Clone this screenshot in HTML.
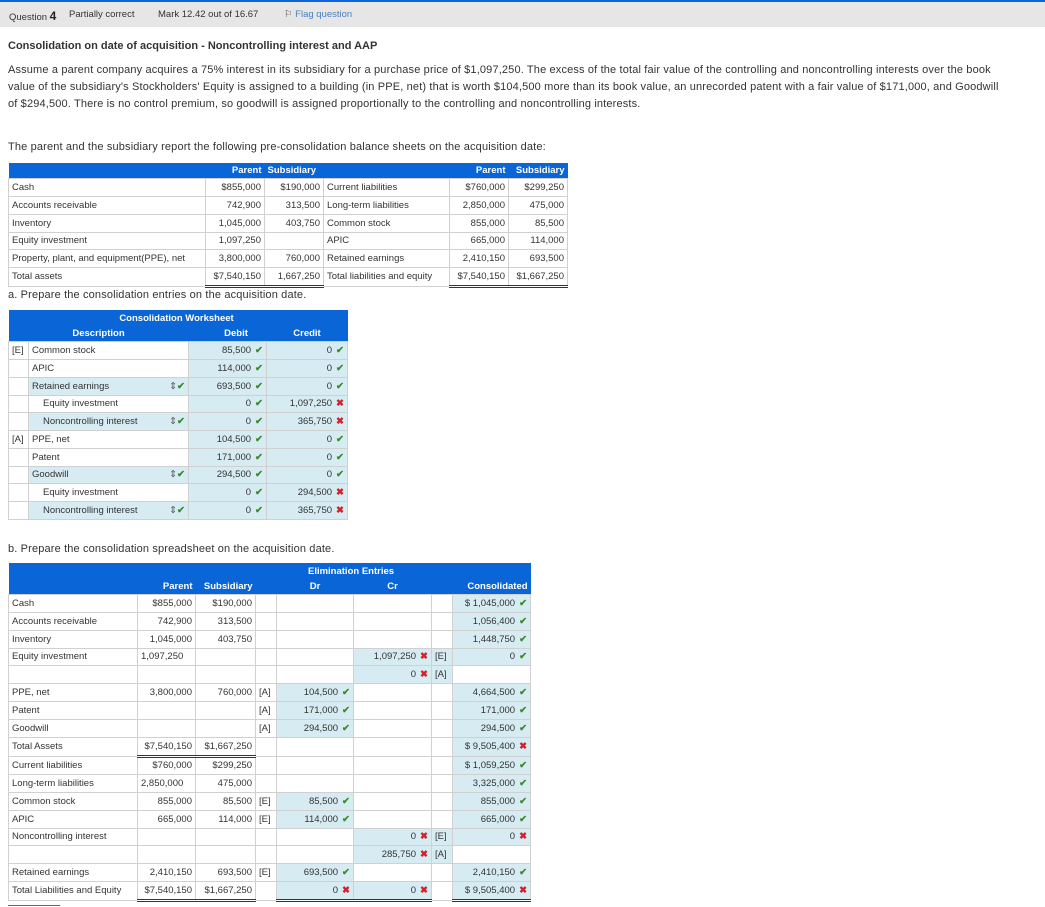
<!DOCTYPE html>
<html><head><meta charset="utf-8"><style>
*{margin:0;padding:0;box-sizing:border-box}
body{width:1045px;height:907px;background:#fff;font-family:"Liberation Sans",sans-serif;color:#333;position:relative;overflow:hidden;font-size:10px}
.bar{position:absolute;left:0;top:0;width:1045px;height:27px;background:#e6e6e6;border-top:2px solid #0a66d6}
.bar span{position:absolute;top:7px;font-size:9.5px;color:#333}
.t{position:absolute;left:8px;white-space:nowrap}
table{position:absolute;border-collapse:collapse;table-layout:fixed;font-size:9.5px}
td{border:1px solid #d0d0d0;padding:0 3px;white-space:nowrap;overflow:hidden}
th{background:#0a66d6;color:#fff;font-weight:bold;padding:0 3px;white-space:nowrap;border:none}
.r{text-align:right}.c{text-align:center}
.b{background:#d6ebf2}
.ok{color:#3a8a2c;font-weight:bold;margin-left:4px}
.no{color:#d4202b;font-weight:bold;margin-left:4px}
.tt{border-top:1px solid #222}
.dd{border-bottom:3px double #334}
</style></head><body>
<div class="bar">
<span style="left:9px">Question <b style="font-size:12px;color:#222">4</b></span>
<span style="left:69px">Partially correct</span>
<span style="left:158px">Mark 12.42 out of 16.67</span>
<span style="left:284px;color:#555">⚐ <span style="position:static;color:#4a7fc0">Flag question</span></span>
</div>
<div class="t" style="top:40px;font-size:11px;font-weight:bold;color:#333">Consolidation on date of acquisition - Noncontrolling interest and AAP</div>
<div class="t" style="top:62px;font-size:11px;line-height:17px;letter-spacing:0.15px">Assume a parent company acquires a 75% interest in its subsidiary for a purchase price of $1,097,250. The excess of the total fair value of the controlling and noncontrolling interests over the book<br>value of the subsidiary's Stockholders' Equity is assigned to a building (in PPE, net) that is worth $104,500 more than its book value, an unrecorded patent with a fair value of $171,000, and Goodwill<br>of $294,500. There is no control premium, so goodwill is assigned proportionally to the controlling and noncontrolling interests.</div>
<div class="t" style="top:141px;font-size:11px;letter-spacing:0.15px">The parent and the subsidiary report the following pre-consolidation balance sheets on the acquisition date:</div>

<table style="left:8px;top:163px;width:559px">
<colgroup><col style="width:197px"><col style="width:59px"><col style="width:59px"><col style="width:126px"><col style="width:59px"><col style="width:59px"></colgroup>
<tr style="height:15px"><th></th><th class="r">Parent</th><th style="text-align:left">Subsidiary</th><th></th><th class="r">Parent</th><th class="r">Subsidiary</th></tr>
<tr style="height:18px"><td>Cash</td><td class="r">$855,000</td><td class="r">$190,000</td><td>Current liabilities</td><td class="r">$760,000</td><td class="r">$299,250</td></tr>
<tr style="height:18px"><td>Accounts receivable</td><td class="r">742,900</td><td class="r">313,500</td><td>Long-term liabilities</td><td class="r">2,850,000</td><td class="r">475,000</td></tr>
<tr style="height:18px"><td>Inventory</td><td class="r">1,045,000</td><td class="r">403,750</td><td>Common stock</td><td class="r">855,000</td><td class="r">85,500</td></tr>
<tr style="height:17px"><td>Equity investment</td><td class="r">1,097,250</td><td></td><td>APIC</td><td class="r">665,000</td><td class="r">114,000</td></tr>
<tr style="height:18px"><td>Property, plant, and equipment(PPE), net</td><td class="r">3,800,000</td><td class="r">760,000</td><td>Retained earnings</td><td class="r">2,410,150</td><td class="r">693,500</td></tr>
<tr style="height:19px"><td>Total assets</td><td class="r tt dd">$7,540,150</td><td class="r tt dd">1,667,250</td><td>Total liabilities and equity</td><td class="r tt dd">$7,540,150</td><td class="r tt dd">$1,667,250</td></tr>
</table>
<div class="t" style="top:289px;font-size:11px;letter-spacing:0.15px">a. Prepare the consolidation entries on the acquisition date.</div>

<table style="left:8px;top:310px;width:339px">
<colgroup><col style="width:20px"><col style="width:160px"><col style="width:78px"><col style="width:81px"></colgroup>
<tr style="height:16px"><th colspan="4" class="c" style="padding-left:0">Consolidation Worksheet</th></tr>
<tr style="height:15px"><th colspan="2" class="c">Description</th><th class="c" style="padding-left:20px">Debit</th><th class="c">Credit</th></tr>
<tr style="height:18px"><td>[E]</td><td>Common stock</td><td class="r b">85,500<span class="ok">✔</span></td><td class="r b">0<span class="ok">✔</span></td></tr>
<tr style="height:18px"><td></td><td>APIC</td><td class="r b">114,000<span class="ok">✔</span></td><td class="r b">0<span class="ok">✔</span></td></tr>
<tr style="height:18px"><td></td><td class="b">Retained earnings<span style="float:right;color:#555">⇕<span class="ok" style="margin:0">✔</span></span></td><td class="r b">693,500<span class="ok">✔</span></td><td class="r b">0<span class="ok">✔</span></td></tr>
<tr style="height:17px"><td></td><td style="padding-left:14px">Equity investment</td><td class="r b">0<span class="ok">✔</span></td><td class="r b">1,097,250<span class="no">✖</span></td></tr>
<tr style="height:18px"><td></td><td class="b" style="padding-left:14px">Noncontrolling interest<span style="float:right;color:#555">⇕<span class="ok" style="margin:0">✔</span></span></td><td class="r b">0<span class="ok">✔</span></td><td class="r b">365,750<span class="no">✖</span></td></tr>
<tr style="height:18px"><td>[A]</td><td>PPE, net</td><td class="r b">104,500<span class="ok">✔</span></td><td class="r b">0<span class="ok">✔</span></td></tr>
<tr style="height:18px"><td></td><td>Patent</td><td class="r b">171,000<span class="ok">✔</span></td><td class="r b">0<span class="ok">✔</span></td></tr>
<tr style="height:17px"><td></td><td class="b">Goodwill<span style="float:right;color:#555">⇕<span class="ok" style="margin:0">✔</span></span></td><td class="r b">294,500<span class="ok">✔</span></td><td class="r b">0<span class="ok">✔</span></td></tr>
<tr style="height:18px"><td></td><td style="padding-left:14px">Equity investment</td><td class="r b">0<span class="ok">✔</span></td><td class="r b">294,500<span class="no">✖</span></td></tr>
<tr style="height:18px"><td></td><td class="b" style="padding-left:14px">Noncontrolling interest<span style="float:right;color:#555">⇕<span class="ok" style="margin:0">✔</span></span></td><td class="r b">0<span class="ok">✔</span></td><td class="r b">365,750<span class="no">✖</span></td></tr>
</table>
<div class="t" style="top:543px;font-size:11px;letter-spacing:0.15px">b. Prepare the consolidation spreadsheet on the acquisition date.</div>

<table style="left:8px;top:563px;width:522px">
<colgroup><col style="width:129px"><col style="width:58px"><col style="width:60px"><col style="width:21px"><col style="width:77px"><col style="width:78px"><col style="width:21px"><col style="width:78px"></colgroup>
<tr style="height:16px"><th></th><th></th><th></th><th></th><th colspan="3" class="c" style="padding-right:30px">Elimination Entries</th><th></th></tr>
<tr style="height:15px"><th></th><th class="r">Parent</th><th class="r">Subsidiary</th><th></th><th class="c">Dr</th><th class="c">Cr</th><th></th><th class="r">Consolidated</th></tr>
<tr style="height:18px"><td>Cash</td><td class="r">$855,000</td><td class="r">$190,000</td><td></td><td></td><td></td><td></td><td class="r b">$ 1,045,000<span class="ok">✔</span></td></tr>
<tr style="height:18px"><td>Accounts receivable</td><td class="r">742,900</td><td class="r">313,500</td><td></td><td></td><td></td><td></td><td class="r b">1,056,400<span class="ok">✔</span></td></tr>
<tr style="height:18px"><td>Inventory</td><td class="r">1,045,000</td><td class="r">403,750</td><td></td><td></td><td></td><td></td><td class="r b">1,448,750<span class="ok">✔</span></td></tr>
<tr style="height:17px"><td>Equity investment</td><td>1,097,250</td><td></td><td></td><td></td><td class="r b">1,097,250<span class="no">✖</span></td><td class="b">[E]</td><td class="r b">0<span class="ok">✔</span></td></tr>
<tr style="height:18px"><td></td><td></td><td></td><td></td><td></td><td class="r b">0<span class="no">✖</span></td><td class="b">[A]</td><td></td></tr>
<tr style="height:18px"><td>PPE, net</td><td class="r">3,800,000</td><td class="r">760,000</td><td>[A]</td><td class="r b">104,500<span class="ok">✔</span></td><td></td><td></td><td class="r b">4,664,500<span class="ok">✔</span></td></tr>
<tr style="height:18px"><td>Patent</td><td></td><td></td><td>[A]</td><td class="r b">171,000<span class="ok">✔</span></td><td></td><td></td><td class="r b">171,000<span class="ok">✔</span></td></tr>
<tr style="height:18px"><td>Goodwill</td><td></td><td></td><td>[A]</td><td class="r b">294,500<span class="ok">✔</span></td><td></td><td></td><td class="r b">294,500<span class="ok">✔</span></td></tr>
<tr style="height:19px"><td>Total Assets</td><td class="r tt dd">$7,540,150</td><td class="r tt dd">$1,667,250</td><td></td><td></td><td></td><td></td><td class="r b tt">$ 9,505,400<span class="no">✖</span></td></tr>
<tr style="height:18px"><td>Current liabilities</td><td class="r">$760,000</td><td class="r">$299,250</td><td></td><td></td><td></td><td></td><td class="r b">$ 1,059,250<span class="ok">✔</span></td></tr>
<tr style="height:18px"><td>Long-term liabilities</td><td>2,850,000</td><td class="r">475,000</td><td></td><td></td><td></td><td></td><td class="r b">3,325,000<span class="ok">✔</span></td></tr>
<tr style="height:18px"><td>Common stock</td><td class="r">855,000</td><td class="r">85,500</td><td>[E]</td><td class="r b">85,500<span class="ok">✔</span></td><td></td><td></td><td class="r b">855,000<span class="ok">✔</span></td></tr>
<tr style="height:18px"><td>APIC</td><td class="r">665,000</td><td class="r">114,000</td><td>[E]</td><td class="r b">114,000<span class="ok">✔</span></td><td></td><td></td><td class="r b">665,000<span class="ok">✔</span></td></tr>
<tr style="height:17px"><td>Noncontrolling interest</td><td></td><td></td><td></td><td></td><td class="r b">0<span class="no">✖</span></td><td class="b">[E]</td><td class="r b">0<span class="no">✖</span></td></tr>
<tr style="height:18px"><td></td><td></td><td></td><td></td><td></td><td class="r b">285,750<span class="no">✖</span></td><td class="b">[A]</td><td></td></tr>
<tr style="height:18px"><td>Retained earnings</td><td class="r">2,410,150</td><td class="r">693,500</td><td>[E]</td><td class="r b">693,500<span class="ok">✔</span></td><td></td><td></td><td class="r b">2,410,150<span class="ok">✔</span></td></tr>
<tr style="height:19px"><td>Total Liabilities and Equity</td><td class="r dd">$7,540,150</td><td class="r dd">$1,667,250</td><td></td><td class="r b tt dd">0<span class="no">✖</span></td><td class="r b tt dd">0<span class="no">✖</span></td><td></td><td class="r b tt dd">$ 9,505,400<span class="no">✖</span></td></tr>
</table>
<div style="position:absolute;left:8px;top:905px;width:52px;height:1px;background:#3a8a2c"></div>
</body></html>
